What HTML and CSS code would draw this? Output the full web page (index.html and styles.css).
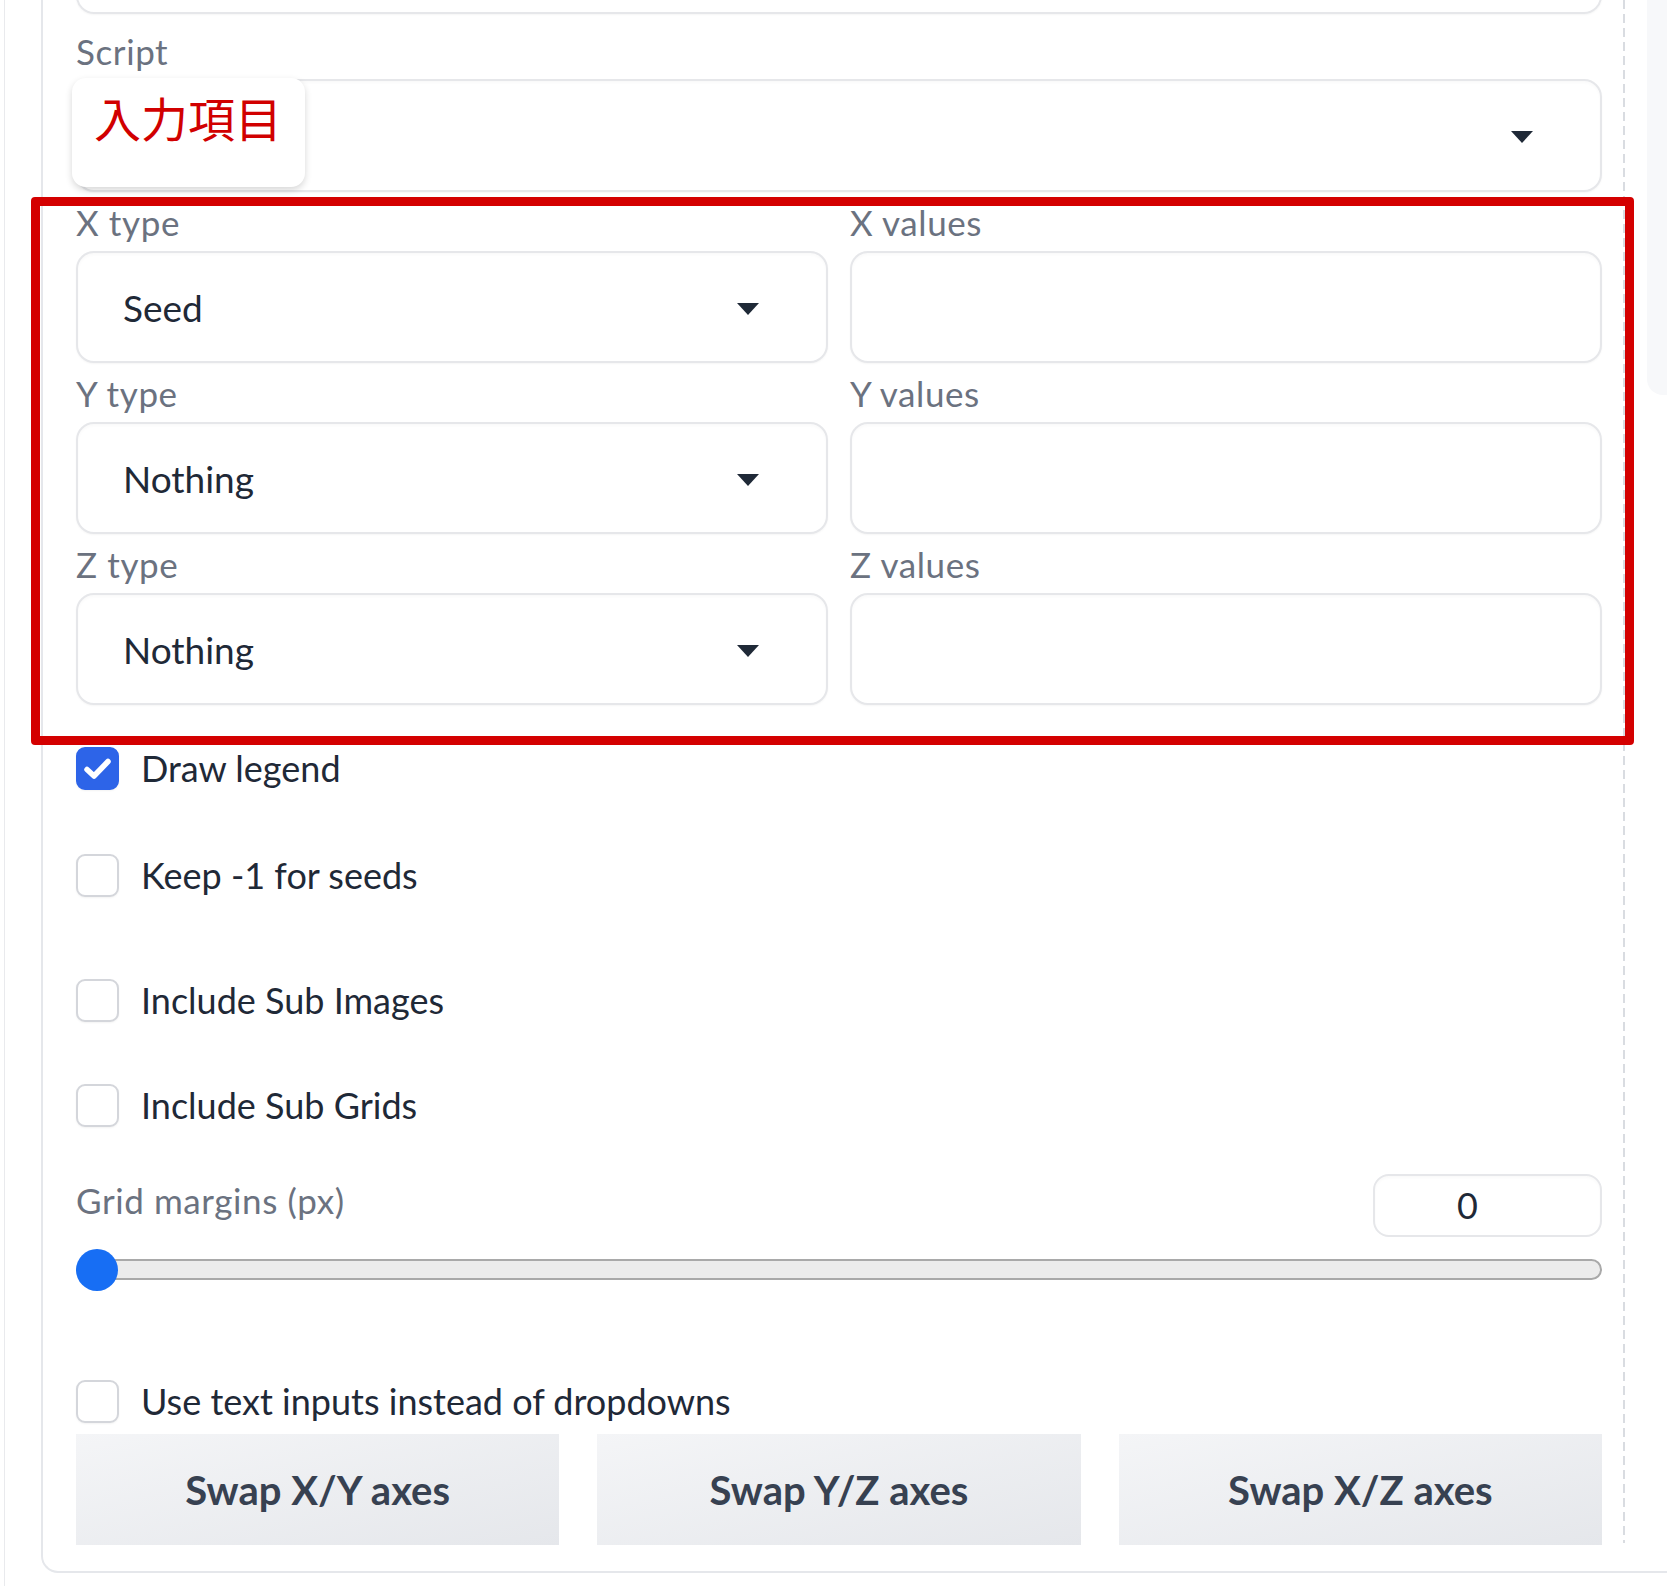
FILE: index.html
```html
<!DOCTYPE html>
<html lang="ja">
<head>
<meta charset="utf-8">
<title>X/Y/Z plot</title>
<link rel="stylesheet" href="styles.css">
</head>
<body>
<div class="frame">
  <div class="card">
    <div class="main">
      <div class="prev-input"></div>

      <div class="field script-field">
        <div class="label">Script</div>
        <div class="select script-select">
          <span class="value"></span>
          <svg class="caret" viewBox="0 0 22 12"><path d="M0 0H22L11 12Z"/></svg>
          <div class="tip">入力項目</div>
        </div>
      </div>

      <div class="axes">
        <div class="mark"></div>
        <div class="field">
          <div class="label">X type</div>
          <div class="select"><span class="value">Seed</span><svg class="caret" viewBox="0 0 22 12"><path d="M0 0H22L11 12Z"/></svg></div>
        </div>
        <div class="field">
          <div class="label">X values</div>
          <div class="textbox"></div>
        </div>
        <div class="field">
          <div class="label">Y type</div>
          <div class="select"><span class="value">Nothing</span><svg class="caret" viewBox="0 0 22 12"><path d="M0 0H22L11 12Z"/></svg></div>
        </div>
        <div class="field">
          <div class="label">Y values</div>
          <div class="textbox"></div>
        </div>
        <div class="field">
          <div class="label">Z type</div>
          <div class="select"><span class="value">Nothing</span><svg class="caret" viewBox="0 0 22 12"><path d="M0 0H22L11 12Z"/></svg></div>
        </div>
        <div class="field">
          <div class="label">Z values</div>
          <div class="textbox"></div>
        </div>
      </div>

      <div class="check c-legend">
        <span class="box on"><svg viewBox="0 0 43 43"><path d="M11 22.5L18 29L32 14.5" fill="none" stroke="#fff" stroke-width="5.5" stroke-linecap="round" stroke-linejoin="round"/></svg></span>
        <span class="check-text">Draw legend</span>
      </div>
      <div class="check c-keep">
        <span class="box"></span>
        <span class="check-text">Keep -1 for seeds</span>
      </div>
      <div class="check c-images">
        <span class="box"></span>
        <span class="check-text">Include Sub Images</span>
      </div>
      <div class="check c-grids">
        <span class="box"></span>
        <span class="check-text">Include Sub Grids</span>
      </div>

      <div class="slider-head">
        <span class="label slider-label">Grid margins (px)</span>
        <div class="num">0</div>
      </div>
      <div class="track"><span class="thumb"></span></div>

      <div class="check c-text">
        <span class="box"></span>
        <span class="check-text">Use text inputs instead of dropdowns</span>
      </div>

      <div class="buttons">
        <button class="btn">Swap X/Y axes</button>
        <button class="btn">Swap Y/Z axes</button>
        <button class="btn">Swap X/Z axes</button>
      </div>
    </div>
    <div class="dash"></div>
    <div class="side"></div>
  </div>
</div>
</body>
</html>
```

FILE: styles.css
```css
html, body {
  margin: 0;
  padding: 0;
  background: #ffffff;
}
body {
  width: 1667px;
  height: 1586px;
  overflow: hidden;
  font-family: Lato, "Noto Sans CJK JP", sans-serif;
  color: #1f2937;
}
.frame {
  margin-left: 4px;
  border-left: 1px solid #e9eaed;
  padding-left: 36px;
  height: 1586px;
}
.card {
  display: flex;
  align-items: flex-start;
  border-left: 2px solid #e5e7eb;
  border-bottom: 2px solid #e5e7eb;
  border-bottom-left-radius: 17px;
  height: 1571px;
  box-sizing: content-box;
}
.main {
  width: 1526px;
  margin-left: 33px;
  display: flex;
  flex-direction: column;
  flex: none;
}
.dash {
  flex: none;
  width: 2px;
  height: 1543px;
  margin-left: 21px;
  background-image: repeating-linear-gradient(to bottom, #d9dce1 0 9px, transparent 9px 14px);
}
.side {
  flex: none;
  width: 20px;
  height: 395px;
  margin-left: 22px;
  background: #f7f8fa;
  border-bottom-left-radius: 16px;
}

.prev-input {
  height: 60px;
  margin-top: -46px;
  border: 2px solid #e6e7ea;
  border-radius: 18px;
  box-sizing: border-box;
  box-shadow: 0 1px 2px rgba(0,0,0,0.04);
}

.label {
  display: block;
  font-size: 35px;
  letter-spacing: 0.6px;
  line-height: 40px;
  color: #6b7280;
  height: 40px;
}
.field {
  display: flex;
  flex-direction: column;
  gap: 9px;
  min-width: 0;
}
.script-field {
  margin-top: 17px;
  gap: 8px;
}
.select, .textbox {
  position: relative;
  display: flex;
  align-items: center;
  height: 112px;
  box-sizing: border-box;
  border: 2px solid #e6e7ea;
  border-radius: 18px;
  background: #ffffff;
  padding: 0 67px 0 45px;
  box-shadow: inset 0 2px 3px rgba(0,0,0,0.025), 0 1px 2px rgba(0,0,0,0.04);
}
.script-select {
  height: 113px;
}
.value {
  font-size: 37px;
  color: #1f2937;
  flex: 1;
}
.caret {
  flex: none;
  width: 22px;
  height: 12px;
  margin-top: 3px;
  fill: #1f2937;
}
.tip {
  position: absolute;
  left: -6px;
  top: -3px;
  width: 233px;
  height: 109px;
  box-sizing: border-box;
  padding: 15px 0 0 22px;
  background: #ffffff;
  border-radius: 14px;
  box-shadow: 0 3px 7px rgba(0,0,0,0.16);
  font-family: "Noto Sans CJK JP", sans-serif;
  font-size: 47px;
  line-height: 47px;
  color: #d10000;
  white-space: nowrap;
}

.axes {
  position: relative;
  margin-top: 10px;
  display: grid;
  grid-template-columns: 1fr 1fr;
  column-gap: 22px;
  row-gap: 10px;
}
.mark {
  position: absolute;
  left: -45px;
  right: -32px;
  top: -5px;
  bottom: -40px;
  border: 9px solid #d40000;
  border-radius: 4px;
  pointer-events: none;
  z-index: 2;
}

.check {
  display: flex;
  align-items: center;
  gap: 22px;
  height: 43px;
}
.c-legend { margin-top: 42px; }
.c-keep { margin-top: 64px; }
.c-images { margin-top: 82px; }
.c-grids { margin-top: 62px; }
.c-text { margin-top: 100px; }
.box {
  flex: none;
  width: 43px;
  height: 43px;
  box-sizing: border-box;
  border: 2px solid #d4d6db;
  border-radius: 9px;
  background: #ffffff;
  box-shadow: 0 1px 2px rgba(0,0,0,0.05);
}
.box svg {
  display: block;
  width: 43px;
  height: 43px;
  margin: -2px;
}
.box.on {
  background: #2d64e8;
  border-color: #2d64e8;
}
.check-text {
  font-size: 36px;
  line-height: 43px;
  color: #1f2937;
}

.slider-head {
  margin-top: 47px;
  display: flex;
  align-items: flex-start;
  justify-content: space-between;
}
.slider-label {
  margin-top: 6px;
}
.num {
  width: 229px;
  height: 63px;
  box-sizing: border-box;
  border: 2px solid #e6e7ea;
  border-radius: 16px;
  padding-right: 40px;
  font-size: 36px;
  line-height: 59px;
  text-align: center;
  color: #1f2937;
  box-shadow: inset 0 2px 3px rgba(0,0,0,0.025);
}
.track {
  margin-top: 22px;
  height: 21px;
  box-sizing: border-box;
  border: 2px solid #a9a9a9;
  border-radius: 11px;
  background: #ececec;
  display: flex;
  align-items: center;
}
.thumb {
  flex: none;
  width: 42px;
  height: 42px;
  margin-left: -2px;
  border-radius: 50%;
  background: #176ef4;
}

.buttons {
  margin-top: 11px;
  display: grid;
  grid-template-columns: repeat(3, 1fr);
  column-gap: 38px;
}
.btn {
  height: 111px;
  border: none;
  border-radius: 0;
  background: linear-gradient(to bottom right, #f4f5f7, #e5e7eb);
  font-family: Lato, sans-serif;
  font-weight: 700;
  font-size: 40px;
  color: #374151;
  padding: 0;
}
```
